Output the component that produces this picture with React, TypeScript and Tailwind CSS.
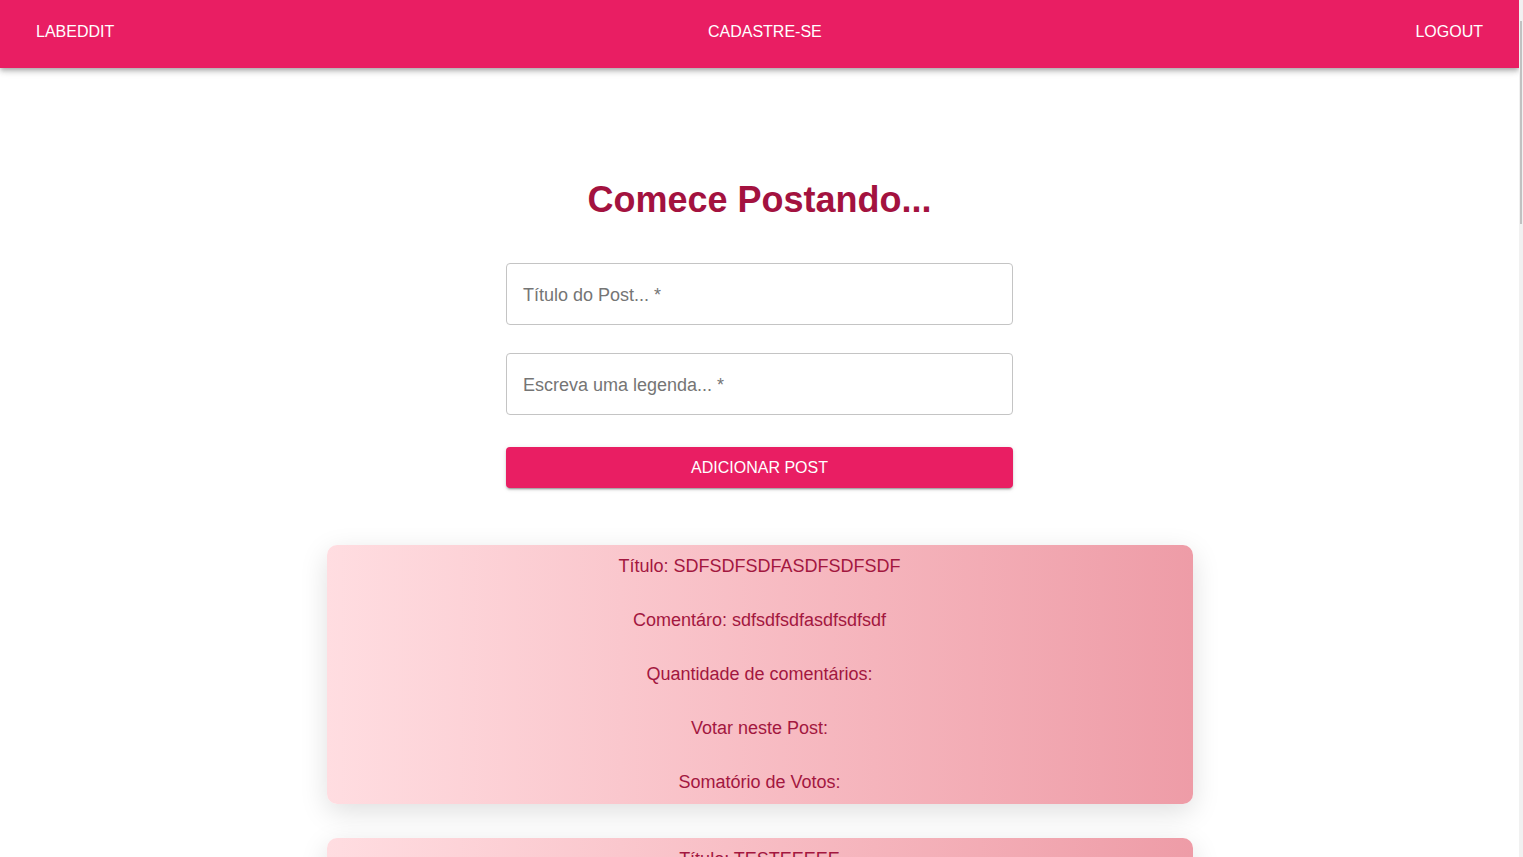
import React from "react";

const posts = [
  { title: "SDFSDFSDFASDFSDFSDF", body: "sdfsdfsdfasdfsdfsdf" },
  { title: "TESTEEEEE", body: "testeeeee" },
];

function PostCard({ title, body }: { title: string; body: string }) {
  const lines = [
    `Título: ${title}`,
    `Comentáro: ${body}`,
    "Quantidade de comentários:",
    "Votar neste Post:",
    "Somatório de Votos:",
  ];
  return (
    <div className="w-[866px] shrink-0 rounded-[10px] bg-gradient-to-r from-[#ffdde1] to-[#ee9ca7] pt-[11px] pb-[11px] shadow-[0_8px_28px_rgba(0,0,0,0.13)] flex flex-col items-center gap-[33px]">
      {lines.map((l) => (
        <p key={l} className="text-[18px] leading-[21px] text-[#a3173f]">
          {l}
        </p>
      ))}
    </div>
  );
}

export default function App() {
  return (
    <div
      className="flex h-[857px] w-full overflow-hidden bg-white"
      style={{ fontFamily: '"Liberation Sans", Arial, sans-serif' }}
    >
      <div className="flex min-w-0 flex-1 flex-col overflow-hidden">
        <header className="relative z-10 h-[68px] shrink-0 bg-[#e91e63] shadow-[0_2px_4px_-1px_rgba(0,0,0,0.2),0_4px_5px_0_rgba(0,0,0,0.14),0_1px_10px_0_rgba(0,0,0,0.12)]">
          <div className="flex h-[64px] items-center justify-between px-6">
            <button className="px-3 text-[16px] uppercase text-white">LABEDDIT</button>
            <button className="px-3 text-[16px] uppercase text-white">CADASTRE-SE</button>
            <button className="px-3 text-[16px] uppercase text-white">LOGOUT</button>
          </div>
        </header>
        <main className="flex flex-col items-center">
          <h1 className="mt-[111px] text-[36px] font-bold leading-[42px] text-[#a3123f]">
            Comece Postando...
          </h1>
          <div className="mt-[42px] flex h-[62px] w-[507px] items-center rounded-[4px] border border-[#c4c4c4] px-[16px] pt-[2px] text-[18px] text-[#757575]">
            Título do Post... *
          </div>
          <div className="mt-[28px] flex h-[62px] w-[507px] items-center rounded-[4px] border border-[#c4c4c4] px-[16px] pt-[2px] text-[18px] text-[#757575]">
            Escreva uma legenda... *
          </div>
          <button className="mt-[32px] flex h-[41px] w-[507px] items-center justify-center rounded-[4px] bg-[#e91e63] text-[16px] uppercase text-white shadow-[0_3px_1px_-2px_rgba(0,0,0,0.2),0_2px_2px_0_rgba(0,0,0,0.14),0_1px_5px_0_rgba(0,0,0,0.12)]">
            ADICIONAR POST
          </button>
          <div className="mt-[57px] flex flex-col items-center gap-[34px]">
            {posts.map((p) => (
              <PostCard key={p.title} title={p.title} body={p.body} />
            ))}
          </div>
        </main>
      </div>
      <div className="w-[4px] shrink-0 bg-[#f1f1f1] pl-[1px] pr-[1px]">
        <div className="mt-[21px] h-[203px] w-[2px] bg-[#c1c1c1]" />
      </div>
    </div>
  );
}
